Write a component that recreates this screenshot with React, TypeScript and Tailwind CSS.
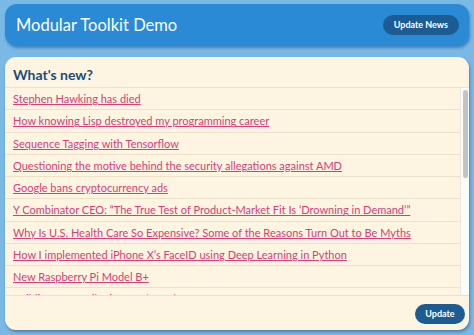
const news = [
  "Stephen Hawking has died",
  "How knowing Lisp destroyed my programming career",
  "Sequence Tagging with Tensorflow",
  "Questioning the motive behind the security allegations against AMD",
  "Google bans cryptocurrency ads",
  "Y Combinator CEO: \u201cThe True Test of Product-Market Fit Is \u2018Drowning in Demand\u2019\u201d",
  "Why Is U.S. Health Care So Expensive? Some of the Reasons Turn Out to Be Myths",
  "How I implemented iPhone X\u2019s FaceID using Deep Learning in Python",
  "New Raspberry Pi Model B+",
  "Building a Compiler in Rust (2018)",
];

export default function App() {
  return (
    <div
      className="w-[474px] h-[335px] overflow-hidden bg-[#7ab8e6] px-[5px] pt-[4px] flex flex-col gap-[11px]"
      style={{ fontFamily: "Lato, 'Noto Sans', sans-serif" }}
    >
      {/* header */}
      <div className="h-[42px] shrink-0 rounded-[12px] bg-[#2a8ad6] shadow-[1px_2px_3px_rgba(20,60,110,0.45)] flex items-center justify-between pl-[11px] pr-[10px]">
        <span className="text-white text-[16.5px] leading-none">Modular Toolkit Demo</span>
        <button className="h-[20px] px-[11px] rounded-full bg-[#1d5b93] text-white text-[9px] font-bold">
          Update News
        </button>
      </div>

      {/* news card */}
      <div className="h-[273px] shrink-0 rounded-[11px] bg-[#fdf5e2] shadow-[1px_2px_3px_rgba(20,60,110,0.45)] flex flex-col overflow-hidden">
        <div className="h-[31px] shrink-0 flex items-end pl-[8px] pb-[5px] border-b border-[#ece2c9]">
          <span className="text-[14px] font-bold text-[#1b4c7a] leading-none">What's new?</span>
        </div>
        <div className="h-[207px] shrink-0 flex">
          <div className="flex-1 overflow-hidden">
            {news.map((n) => (
              <div
                key={n}
                className="h-[22.25px] box-border border-b border-[#ece2c9] flex items-center pl-[8px] whitespace-nowrap"
              >
                <a className="text-[11px] text-[#d4407a] underline leading-none cursor-pointer">{n}</a>
              </div>
            ))}
          </div>
          <div className="w-[9px] bg-[#fbfbf9] border-l border-[#ece7dc] flex justify-center pt-[2px]">
            <div className="w-[5px] h-[88px] rounded-full bg-[#c3c3c3]" />
          </div>
        </div>
        <div className="flex-1 border-t border-[#ece2c9] flex items-center justify-end pr-[4px] pt-[2px]">
          <button className="h-[20px] w-[50px] rounded-full bg-[#1d5b93] text-white text-[9px] font-bold">
            Update
          </button>
        </div>
      </div>
    </div>
  );
}
